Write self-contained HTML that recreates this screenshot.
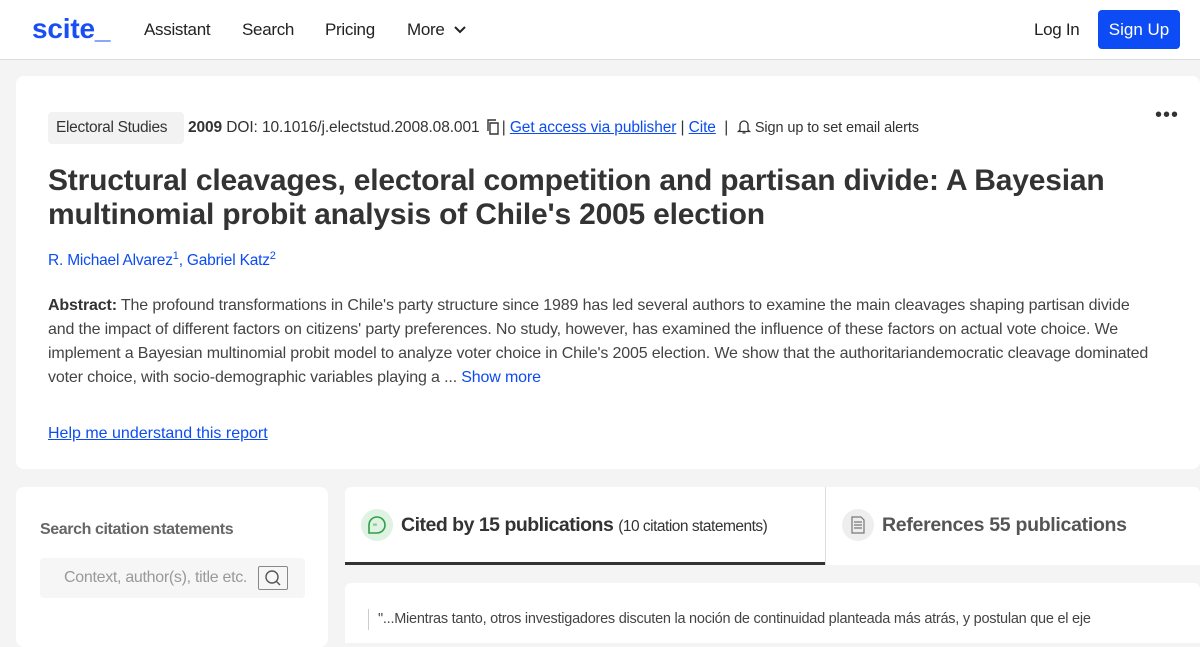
<!DOCTYPE html><html><head><meta charset="utf-8"><style>
*{margin:0;padding:0;box-sizing:border-box}
body{width:1200px;height:630px;overflow:hidden;background:#f4f4f4;font-family:"Liberation Sans",sans-serif;color:#333;position:relative}
.nav{position:absolute;left:0;top:0;width:1200px;height:60px;background:#fff;border-bottom:1px solid #ddd}
.nav span{position:absolute;top:20px;font-size:17px;color:#222;letter-spacing:-.3px}
a{color:#0c4cf0}
.card{position:absolute;background:#fff;border-radius:8px}
.abs{position:absolute;left:48px;top:294px;width:1112px;font-size:16px;line-height:24px;color:#444;letter-spacing:-.15px}
</style></head><body>
<div class="nav">
<div style="position:absolute;left:32px;top:13px;font-size:28px;font-weight:bold;color:#1a4ef5;letter-spacing:-.2px">scite_</div>
<span style="left:144px">Assistant</span><span style="left:242px">Search</span><span style="left:325px">Pricing</span>
<span style="left:407px">More <svg width="14" height="10" viewBox="0 0 14 10" style="margin-left:4px"><path d="M2 2l5 5 5-5" fill="none" stroke="#222" stroke-width="2"/></svg></span>
<span style="left:1034px">Log In</span>
<div style="position:absolute;left:1098px;top:10px;width:82px;height:39px;background:#0d4cf5;border-radius:4px;color:#fff;font-size:17px;text-align:center;line-height:39px">Sign Up</div>
</div>
<div class="card" style="left:16px;top:76px;width:1184px;height:393px"></div>
<div style="position:absolute;left:48px;top:112px;height:32px;width:136px;background:#f2f2f2;border-radius:4px;font-size:15.5px;line-height:32px;padding-left:8px;color:#333;letter-spacing:-.3px">Electoral Studies</div>
<div style="position:absolute;left:188px;top:119px;font-size:15.5px;color:#333;letter-spacing:-.1px;white-space:nowrap"><b>2009</b> DOI: 10.1016/j.electstud.2008.08.001 <svg width="18" height="16" viewBox="0 0 16 16" style="vertical-align:-3px"><path d="M5 4h8v11H5zM3 12V1h8" fill="none" stroke="#333" stroke-width="1.4"/></svg>| <a href="#">Get access via publisher</a> | <a href="#">Cite</a> &nbsp;| &nbsp;<svg width="14" height="16" viewBox="0 0 14 16" style="vertical-align:-3px"><path d="M3 11V6a4 4 0 018 0v5l1.5 1.5h-11zM5.5 14h3" fill="none" stroke="#333" stroke-width="1.3"/></svg> <span style="font-size:14.5px">Sign up to set email alerts</span></div>
<div style="position:absolute;left:1155px;top:104px;font-size:20px;letter-spacing:1px;color:#333">•••</div>
<div style="position:absolute;left:48px;top:164px;width:1120px;font-size:30px;line-height:34px;font-weight:bold;color:#333;letter-spacing:-.2px">Structural cleavages, electoral competition and partisan divide: A Bayesian multinomial probit analysis of Chile's 2005 election</div>
<div style="position:absolute;left:48px;top:250px;font-size:15.5px;color:#0c4cf0;letter-spacing:-.2px">R. Michael Alvarez<sup style="font-size:11px">1</sup>, Gabriel Katz<sup style="font-size:11px">2</sup></div>
<div class="abs"><b style="color:#333">Abstract:</b> The profound transformations in Chile's party structure since 1989 has led several authors to examine the main cleavages shaping partisan divide and the impact of different factors on citizens' party preferences. No study, however, has examined the influence of these factors on actual vote choice. We implement a Bayesian multinomial probit model to analyze voter choice in Chile's 2005 election. We show that the authoritariandemocratic cleavage dominated voter choice, with socio-demographic variables playing a ... <span style="color:#0c4cf0">Show more</span></div>
<div style="position:absolute;left:48px;top:425px;font-size:16px"><a href="#">Help me understand this report</a></div>
<div class="card" style="left:16px;top:487px;width:312px;height:160px"></div>
<div style="position:absolute;left:40px;top:521px;font-size:16px;font-weight:bold;color:#666;letter-spacing:-.4px">Search citation statements</div>
<div style="position:absolute;left:40px;top:558px;width:265px;height:40px;background:#f6f6f7;border-radius:4px"></div>
<div style="position:absolute;left:64px;top:569px;font-size:16px;color:#999;letter-spacing:-.3px">Context, author(s), title etc.</div>
<div style="position:absolute;left:258px;top:566px;width:30px;height:24px;border:1px solid #888;border-radius:2px"><svg width="28" height="22" viewBox="0 0 28 22"><circle cx="13" cy="10" r="6" fill="none" stroke="#555" stroke-width="1.4"/><path d="M17 14l4 4" stroke="#555" stroke-width="1.4"/></svg></div>
<div style="position:absolute;left:345px;top:487px;width:855px;height:78px;background:#fff;border-radius:6px 6px 0 0"></div>
<div style="position:absolute;left:825px;top:487px;width:1px;height:78px;background:#ddd"></div>
<div style="position:absolute;left:345px;top:562px;width:480px;height:3px;background:#333"></div>
<div style="position:absolute;left:361px;top:509px;width:32px;height:32px;border-radius:50%;background:#dff3e2"><svg width="32" height="32" viewBox="0 0 32 32"><path d="M16 8a8 8 0 110 16h-8v-8a8 8 0 018-8z" fill="none" stroke="#2e9e48" stroke-width="1.6"/><text x="12" y="22" font-size="11" fill="#2e9e48" font-family="Liberation Sans">"</text></svg></div>
<div style="position:absolute;left:401px;top:514px;font-size:19.5px;font-weight:bold;color:#333;letter-spacing:-.5px">Cited by 15 publications <span style="font-size:15.5px;font-weight:normal">(10 citation statements)</span></div>
<div style="position:absolute;left:842px;top:509px;width:32px;height:32px;border-radius:50%;background:#eee"><svg width="32" height="32" viewBox="0 0 32 32"><path d="M10 8h9l3 3v13H10z M12 13h8M12 16h8M12 19h8" fill="none" stroke="#777" stroke-width="1.2"/></svg></div>
<div style="position:absolute;left:882px;top:514px;font-size:19.5px;font-weight:bold;color:#555;letter-spacing:-.3px">References 55 publications</div>
<div class="card" style="left:345px;top:583px;width:855px;height:60px;border-radius:6px 6px 0 0"></div>
<div style="position:absolute;left:368px;top:609px;width:1px;height:21px;background:#ccc"></div>
<div style="position:absolute;left:378px;top:611px;font-size:14.5px;color:#444;letter-spacing:-.25px">"...Mientras tanto, otros investigadores discuten la noción de continuidad planteada más atrás, y postulan que el eje</div>
</body></html>
